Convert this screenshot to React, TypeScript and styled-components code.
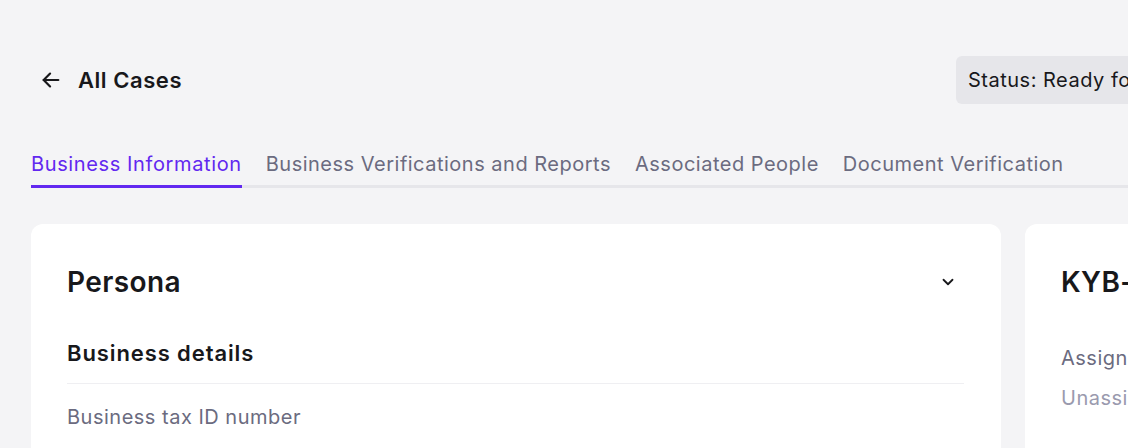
import React from 'react';
import styled, { createGlobalStyle } from 'styled-components';

const GlobalStyle = createGlobalStyle`
  html, body {
    margin: 0;
    padding: 0;
    background: #f4f4f6;
    overflow: hidden;
  }
  body {
    font-family: 'Inter', 'Noto Sans', sans-serif;
    color: #18181b;
  }
`;

const Page = styled.div`
  width: 1320px;
  padding: 56px 31px 0 31px;
  box-sizing: border-box;
`;

const HeaderRow = styled.div`
  display: flex;
  align-items: center;
  justify-content: space-between;
  height: 48px;
`;

const BackLink = styled.a`
  display: flex;
  align-items: center;
  gap: 16px;
  padding-left: 9px;
  font-size: 22px;
  font-weight: 600;
  letter-spacing: 0.55px;
  color: #18181b;
  text-decoration: none;
`;

const StatusPill = styled.div`
  width: 333px;
  height: 48px;
  display: flex;
  align-items: center;
  padding: 0 12px;
  box-sizing: border-box;
  background: #e6e6ea;
  border-radius: 6px;
  font-size: 20px;
  letter-spacing: 0.5px;
  color: #18181b;
  white-space: nowrap;
`;

const Tabs = styled.div`
  display: flex;
  gap: 24px;
  margin-top: 47px;
  border-bottom: 3px solid #e6e6ea;
`;

const Tab = styled.div<{ $active?: boolean }>`
  font-size: 20px;
  letter-spacing: ${p => (p.$active ? '0.62px' : '0.5px')};
  padding-top: 1px;
  padding-bottom: 9px;
  margin-bottom: -3px;
  color: ${p => (p.$active ? '#6228f0' : '#6b6b80')};
  border-bottom: 3px solid ${p => (p.$active ? '#6228f0' : 'transparent')};
  white-space: nowrap;
`;

const Cards = styled.div`
  display: flex;
  gap: 24px;
  margin-top: 36px;
  align-items: flex-start;
`;

const Card = styled.div<{ $width: number }>`
  width: ${p => p.$width}px;
  flex-shrink: 0;
  background: #ffffff;
  border-radius: 12px;
  padding: 40px 37px 40px 36px;
  box-sizing: border-box;
  min-height: 300px;
`;

const CardHead = styled.div`
  display: flex;
  align-items: center;
  justify-content: space-between;
  padding-right: 7px;
`;

const CardTitle = styled.h2`
  margin: 0;
  font-size: 28px;
  font-weight: 600;
  letter-spacing: 0.4px;
  line-height: 36px;
  white-space: nowrap;
`;

const SectionTitle = styled.h3`
  margin: 38px 0 0;
  font-size: 22px;
  font-weight: 600;
  letter-spacing: 0.9px;
  line-height: 30px;
  padding-bottom: 15px;
  border-bottom: 1px solid #efeff2;
`;

const FieldLabel = styled.div<{ $muted?: boolean }>`
  font-size: 20px;
  letter-spacing: 0.5px;
  line-height: 26px;
  white-space: nowrap;
  color: ${p => (p.$muted ? '#9a9aae' : '#6b6b80')};
`;

const DetailList = styled.div`
  margin-top: 20px;
`;

const AssignBlock = styled.div`
  margin-top: 45px;
  display: flex;
  flex-direction: column;
  gap: 14px;
`;

const ArrowLeft = () => (
  <svg width="22" height="22" viewBox="0 0 24 24" fill="none" stroke="#18181b" strokeWidth="2.4" strokeLinecap="round" strokeLinejoin="round">
    <path d="M20 12H4" />
    <path d="M11 19l-7-7 7-7" />
  </svg>
);

const ChevronDown = () => (
  <svg width="18" height="18" viewBox="0 0 24 24" fill="none" stroke="#18181b" strokeWidth="2.4" strokeLinecap="round" strokeLinejoin="round">
    <path d="M6 9l6 6 6-6" />
  </svg>
);

const tabs = [
  'Business Information',
  'Business Verifications and Reports',
  'Associated People',
  'Document Verification',
];

export default function App() {
  return (
    <>
      <GlobalStyle />
      <Page>
        <HeaderRow>
          <BackLink href="#">
            <ArrowLeft />
            All Cases
          </BackLink>
          <StatusPill>Status: Ready for review</StatusPill>
        </HeaderRow>

        <Tabs>
          {tabs.map((t, i) => (
            <Tab key={t} $active={i === 0}>
              {t}
            </Tab>
          ))}
        </Tabs>

        <Cards>
          <Card $width={970}>
            <CardHead>
              <CardTitle>Persona</CardTitle>
              <ChevronDown />
            </CardHead>
            <SectionTitle>Business details</SectionTitle>
            <DetailList>
              <FieldLabel>Business tax ID number</FieldLabel>
            </DetailList>
          </Card>
          <Card $width={280}>
            <CardTitle>KYB-2024-00187</CardTitle>
            <AssignBlock>
              <FieldLabel>Assigned to</FieldLabel>
              <FieldLabel $muted>Unassigned</FieldLabel>
            </AssignBlock>
          </Card>
        </Cards>
      </Page>
    </>
  );
}
